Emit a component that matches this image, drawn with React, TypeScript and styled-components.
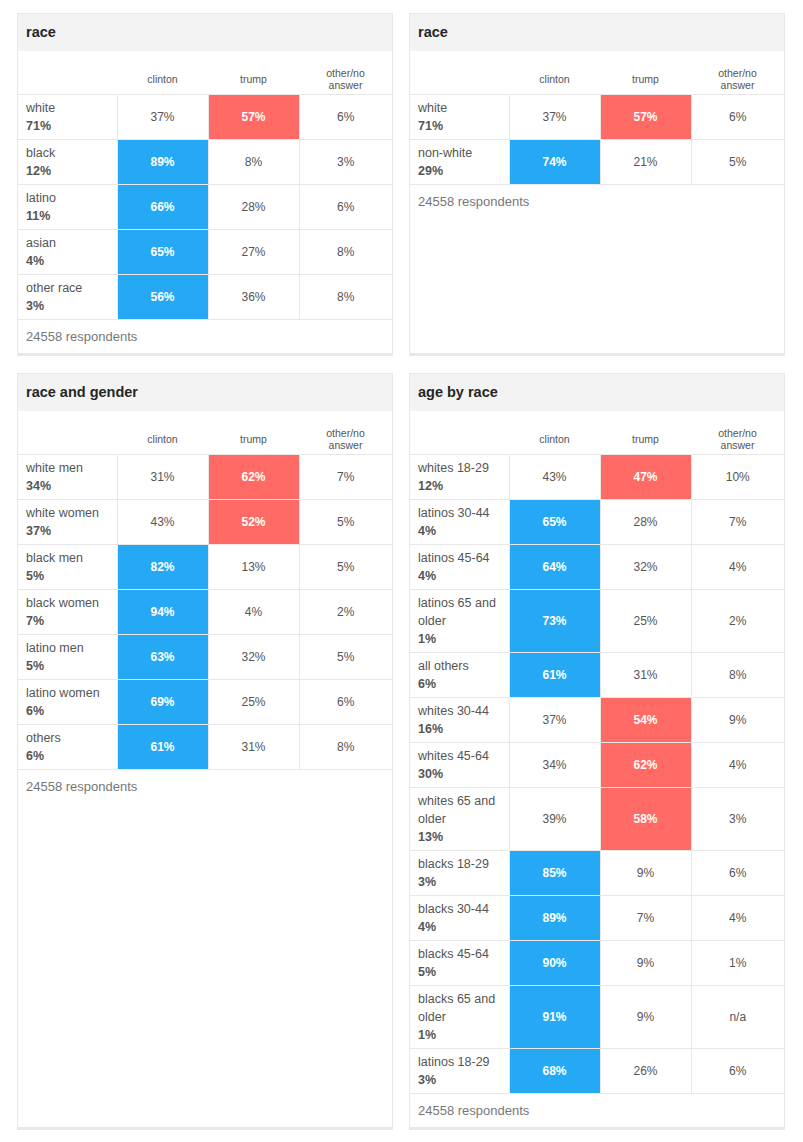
import React from "react";
import styled, { createGlobalStyle } from "styled-components";

const GlobalStyle = createGlobalStyle`
  body {
    margin: 0;
    background: #fff;
    font-family: "Liberation Sans", Arial, sans-serif;
  }
`;

type Row = { label: string; share: string; clinton: number; trump: number; other: string };
type Poll = { title: string; rows: Row[] };

const polls: Poll[] = [
  {
    title: "race",
    rows: [
      { label: "white", share: "71%", clinton: 37, trump: 57, other: "6%" },
      { label: "black", share: "12%", clinton: 89, trump: 8, other: "3%" },
      { label: "latino", share: "11%", clinton: 66, trump: 28, other: "6%" },
      { label: "asian", share: "4%", clinton: 65, trump: 27, other: "8%" },
      { label: "other race", share: "3%", clinton: 56, trump: 36, other: "8%" },
    ],
  },
  {
    title: "race",
    rows: [
      { label: "white", share: "71%", clinton: 37, trump: 57, other: "6%" },
      { label: "non-white", share: "29%", clinton: 74, trump: 21, other: "5%" },
    ],
  },
  {
    title: "race and gender",
    rows: [
      { label: "white men", share: "34%", clinton: 31, trump: 62, other: "7%" },
      { label: "white women", share: "37%", clinton: 43, trump: 52, other: "5%" },
      { label: "black men", share: "5%", clinton: 82, trump: 13, other: "5%" },
      { label: "black women", share: "7%", clinton: 94, trump: 4, other: "2%" },
      { label: "latino men", share: "5%", clinton: 63, trump: 32, other: "5%" },
      { label: "latino women", share: "6%", clinton: 69, trump: 25, other: "6%" },
      { label: "others", share: "6%", clinton: 61, trump: 31, other: "8%" },
    ],
  },
  {
    title: "age by race",
    rows: [
      { label: "whites 18-29", share: "12%", clinton: 43, trump: 47, other: "10%" },
      { label: "latinos 30-44", share: "4%", clinton: 65, trump: 28, other: "7%" },
      { label: "latinos 45-64", share: "4%", clinton: 64, trump: 32, other: "4%" },
      { label: "latinos 65 and older", share: "1%", clinton: 73, trump: 25, other: "2%" },
      { label: "all others", share: "6%", clinton: 61, trump: 31, other: "8%" },
      { label: "whites 30-44", share: "16%", clinton: 37, trump: 54, other: "9%" },
      { label: "whites 45-64", share: "30%", clinton: 34, trump: 62, other: "4%" },
      { label: "whites 65 and older", share: "13%", clinton: 39, trump: 58, other: "3%" },
      { label: "blacks 18-29", share: "3%", clinton: 85, trump: 9, other: "6%" },
      { label: "blacks 30-44", share: "4%", clinton: 89, trump: 7, other: "4%" },
      { label: "blacks 45-64", share: "5%", clinton: 90, trump: 9, other: "1%" },
      { label: "blacks 65 and older", share: "1%", clinton: 91, trump: 9, other: "n/a" },
      { label: "latinos 18-29", share: "3%", clinton: 68, trump: 26, other: "6%" },
    ],
  },
];

const Page = styled.div`
  display: grid;
  grid-template-columns: 376px 376px;
  column-gap: 16px;
  row-gap: 17px;
  padding: 13px 18px 0 17px;
`;

const Card = styled.section`
  display: flex;
  flex-direction: column;
  background: #fff;
  border: 1px solid #e8e8e8;
  border-bottom-width: 3px;
`;

const Header = styled.h2`
  margin: 0;
  height: 37px;
  padding: 0 8px;
  background: #f3f3f3;
  font-size: 14.5px;
  font-weight: 700;
  line-height: 37px;
  color: #262626;
`;

const Table = styled.table`
  width: 100%;
  table-layout: fixed;
  border-collapse: collapse;
`;

const HeadCell = styled.th`
  height: 43px;
  padding: 16px 4px 3px;
  box-sizing: border-box;
  vertical-align: middle;
  text-align: center;
  font-size: 10.5px;
  font-weight: 400;
  line-height: 12px;
  color: #555;
`;

const Label = styled.td`
  padding: 4px 4px 4px 8px;
  border-top: 1px solid #e8e8e8;
  font-size: 12.5px;
  line-height: 18px;
  color: #555;
  vertical-align: middle;

  strong {
    display: block;
    font-weight: 700;
  }
`;

const Value = styled.td<{ $win?: "clinton" | "trump" }>`
  padding: 4px;
  border-top: 1px solid #e8e8e8;
  border-left: 1px solid #e8e8e8;
  text-align: center;
  font-size: 12px;
  line-height: 18px;
  font-weight: ${(p) => (p.$win ? 700 : 400)};
  color: ${(p) => (p.$win ? "#fff" : "#555")};
  background: ${(p) =>
    p.$win === "clinton" ? "#26a9f5" : p.$win === "trump" ? "#ff6a64" : "transparent"};
`;

const Footer = styled.div`
  height: 33px;
  padding: 0 8px;
  border-top: 1px solid #e8e8e8;
  font-size: 13px;
  line-height: 33px;
  color: #777;
`;

const PollCard: React.FC<{ poll: Poll }> = ({ poll }) => (
  <Card>
    <Header>{poll.title}</Header>
    <Table>
      <colgroup>
        <col style={{ width: 99 }} />
        <col style={{ width: 91 }} />
        <col style={{ width: 91 }} />
        <col />
      </colgroup>
      <thead>
        <tr>
          <HeadCell />
          <HeadCell>clinton</HeadCell>
          <HeadCell>trump</HeadCell>
          <HeadCell>
            other/no
            <br />
            answer
          </HeadCell>
        </tr>
      </thead>
      <tbody>
        {poll.rows.map((r) => {
          const win = r.clinton > r.trump ? "clinton" : "trump";
          return (
            <tr key={r.label}>
              <Label>
                {r.label}
                <strong>{r.share}</strong>
              </Label>
              <Value $win={win === "clinton" ? "clinton" : undefined}>{r.clinton}%</Value>
              <Value $win={win === "trump" ? "trump" : undefined}>{r.trump}%</Value>
              <Value>{r.other}</Value>
            </tr>
          );
        })}
      </tbody>
    </Table>
    <Footer>24558 respondents</Footer>
  </Card>
);

const App: React.FC = () => (
  <>
    <GlobalStyle />
    <Page>
      {polls.map((p, i) => (
        <PollCard key={i} poll={p} />
      ))}
    </Page>
  </>
);

export default App;
